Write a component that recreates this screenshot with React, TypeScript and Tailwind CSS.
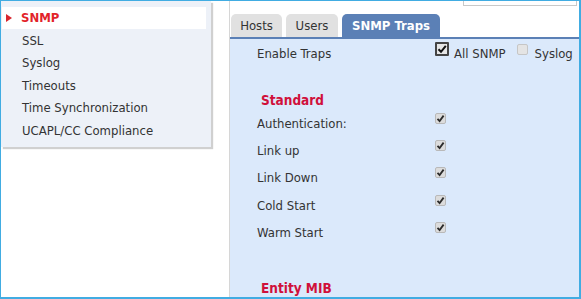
import React from "react";

const font = { fontFamily: '"DejaVu Sans Condensed", "DejaVu Sans", sans-serif' };

function SmallCheck() {
  return (
    <div className="w-[11px] h-[11px] rounded-[2px] border border-[#b9b9b9] bg-[#dcdcdc] flex items-center justify-center">
      <svg width="9" height="9" viewBox="0 0 9 9">
        <path d="M1.5 4.8 L3.6 7 L7.6 1.6" stroke="#2b2b2b" strokeWidth="1.8" fill="none" />
      </svg>
    </div>
  );
}

const menu = ["SSL", "Syslog", "Timeouts", "Time Synchronization", "UCAPL/CC Compliance"];
const rows = ["Authentication:", "Link up", "Link Down", "Cold Start", "Warm Start"];

export default function App() {
  return (
    <div
      className="w-[581px] h-[299px] overflow-hidden bg-white border-t border-l border-b-2 border-r-2 border-[#41ace2] flex text-[13px] text-[#333]"
      style={font}
    >
      {/* Left column */}
      <div className="w-[228px] shrink-0">
        <div className="w-[210px] bg-[#edf1f8] pt-[6px] pb-[5px] shadow-[2px_2px_1px_#d0d0d0]">
          <div className="flex items-center h-[22px] bg-white mr-[5px] ml-[1px]">
            <svg width="6" height="8" viewBox="0 0 6 8" className="ml-[4px] mr-[9px]">
              <path d="M0 0 L6 4 L0 8 Z" fill="#d8262e" />
            </svg>
            <span className="font-bold text-[#e2232a]">SNMP</span>
          </div>
          {menu.map((m) => (
            <div key={m} className="h-[22.5px] flex items-center pl-[21px]">
              {m}
            </div>
          ))}
        </div>
      </div>
      {/* Right column */}
      <div className="flex-1 flex flex-col border-l border-[#d6d6d6]">
        <div className="h-[13px] shrink-0 relative">
          <div className="absolute right-[2px] top-[-4px] w-[114px] h-[9px] border border-[#c9c9c9] bg-white" />
        </div>
        <div className="flex items-end h-[25px] shrink-0 pl-[1px] gap-[4px] border-b-2 border-[#5b80b6]">
          <div className="h-[23px] w-[51px] rounded-t-[5px] bg-[#e1e1e1] flex items-center justify-center">Hosts</div>
          <div className="h-[23px] w-[52px] rounded-t-[5px] bg-[#e1e1e1] flex items-center justify-center">Users</div>
          <div className="h-[23px] px-[10px] whitespace-nowrap rounded-t-[5px] bg-[#5b80b6] text-white font-bold flex items-center justify-center">SNMP Traps</div>
        </div>
        <div className="flex-1 bg-[#dbe9fb] pl-[27px]">
          <div className="flex items-center h-[30px]">
            <span className="w-[178px]">Enable Traps</span>
            <div className="w-[14px] h-[14px] border-2 border-[#444] bg-[#e6e6e6] rounded-[1px] flex items-center justify-center -mt-[10px]">
              <svg width="10" height="10" viewBox="0 0 10 10">
                <path d="M1.5 5.2 L4 7.8 L8.8 1.8" stroke="#111" strokeWidth="2" fill="none" />
              </svg>
            </div>
            <span className="ml-[5px]">All SNMP</span>
            <div className="ml-[11px] w-[11px] h-[11px] rounded-[2px] border border-[#c6c6c6] bg-[#e4e4e4] -mt-[9px]" />
            <span className="ml-[7px]">Syslog</span>
          </div>
          <div className="mt-[23px] pl-[4px] font-bold text-[#d0103a] text-[13.5px] leading-[16px]">Standard</div>
          <div className="mt-[2px] flex flex-col">
            {rows.map((r) => (
              <div key={r} className="flex items-center h-[27.3px]">
                <span className="w-[178px]">{r}</span>
                <div className="-mt-[11px]">
                  <SmallCheck />
                </div>
              </div>
            ))}
          </div>
          <div className="mt-[34px] pl-[4px] font-bold text-[#d0103a] text-[13.5px] leading-[16px]">Entity MIB</div>
        </div>
      </div>
    </div>
  );
}
